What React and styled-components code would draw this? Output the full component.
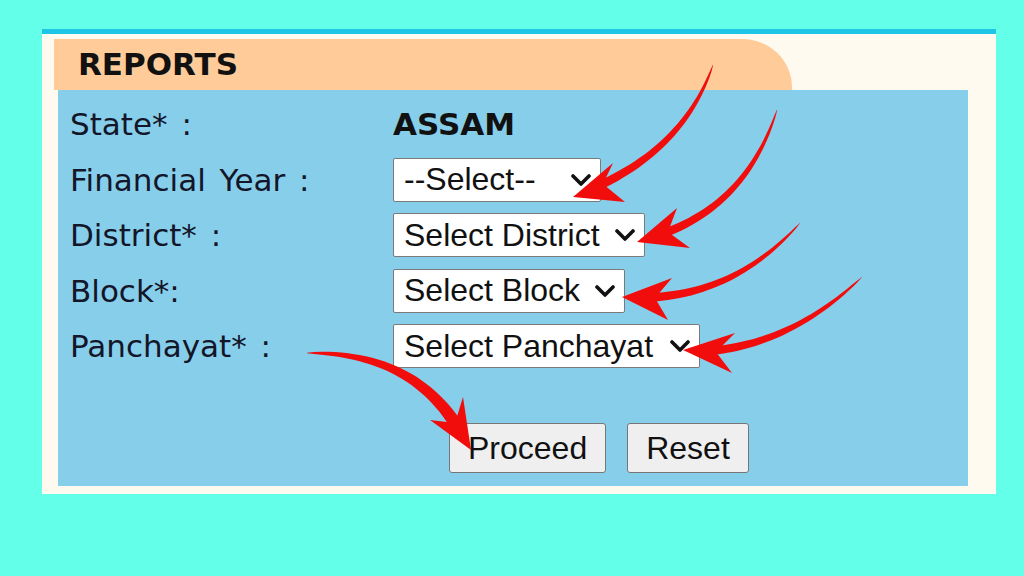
import styled, { createGlobalStyle } from "styled-components";

const GlobalStyle = createGlobalStyle`
  body {
    margin: 0;
    background: #64ffe8;
    font-family: "DejaVu Sans", Verdana, sans-serif;
  }
`;

const fields = [
  { label: "Financial Year :", value: "--Select--", width: 208 },
  { label: "District* :", value: "Select District", width: 252 },
  { label: "Block*:", value: "Select Block", width: 232 },
  { label: "Panchayat* :", value: "Select Panchayat", width: 307 },
];

// tail, control, notch (back of head), tip, two barbs, shaft width at head
const arrows = [
  { tail: [713, 65], ctrl: [684, 149], notch: [603, 184], tip: [573, 197], b1: [613, 163], b2: [625, 202], w: 9 },
  { tail: [777, 110], ctrl: [746, 207], notch: [668, 232], tip: [637, 242], b1: [677, 208], b2: [690, 248], w: 9 },
  { tail: [800, 223], ctrl: [735, 296], notch: [655, 298], tip: [622, 297], b1: [672, 278], b2: [668, 320], w: 9 },
  { tail: [862, 277], ctrl: [790, 346], notch: [716, 352], tip: [683, 350], b1: [735, 333], b2: [732, 373], w: 9 },
  { tail: [307, 353], ctrl: [415, 352], notch: [455, 423], tip: [471, 450], b1: [430, 420], b2: [463, 397], w: 13 },
];

const shaftPath = ({ tail, ctrl, notch, tip, w }) => {
  const end = [notch[0] + 0.35 * (tip[0] - notch[0]), notch[1] + 0.35 * (tip[1] - notch[1])];
  const n = 30;
  const left = [];
  const right = [];
  for (let i = 0; i <= n; i++) {
    const t = i / n;
    const x = (1 - t) * (1 - t) * tail[0] + 2 * (1 - t) * t * ctrl[0] + t * t * end[0];
    const y = (1 - t) * (1 - t) * tail[1] + 2 * (1 - t) * t * ctrl[1] + t * t * end[1];
    const dx = 2 * (1 - t) * (ctrl[0] - tail[0]) + 2 * t * (end[0] - ctrl[0]);
    const dy = 2 * (1 - t) * (ctrl[1] - tail[1]) + 2 * t * (end[1] - ctrl[1]);
    const len = Math.hypot(dx, dy) || 1;
    const half = (0.4 + (w - 0.4) * Math.pow(t, 0.6)) / 2;
    const nx = -dy / len;
    const ny = dx / len;
    left.push([x + nx * half, y + ny * half]);
    right.push([x - nx * half, y - ny * half]);
  }
  const pts = [...left, ...right.reverse()];
  return "M" + pts.map((p) => p[0].toFixed(1) + " " + p[1].toFixed(1)).join(" L") + " Z";
};

const headPath = ({ notch, tip, b1, b2 }) =>
  `M${tip[0]} ${tip[1]} L${b1[0]} ${b1[1]} L${notch[0]} ${notch[1]} L${b2[0]} ${b2[1]} Z`;

const Chevron = () => (
  <svg width="20" height="12" viewBox="0 0 20 12">
    <polyline points="2,2 10,10 18,2" fill="none" stroke="#111" strokeWidth="3.6" strokeLinecap="round" strokeLinejoin="round" />
  </svg>
);

const App = () => {
  return (
    <Page>
      <GlobalStyle />
      <Frame>
        <Tab>REPORTS</Tab>
        <Panel>
          <Form>
            <Label>State* :</Label>
            <StateValue>ASSAM</StateValue>
            {fields.map((f) => (
              <Row key={f.label}>
                <Label>{f.label}</Label>
                <Cell>
                  <SelectBox $width={f.width}>
                    <span>{f.value}</span>
                    <Chevron />
                  </SelectBox>
                </Cell>
              </Row>
            ))}
          </Form>
          <ButtonRow>
            <Button>Proceed</Button>
            <Button>Reset</Button>
          </ButtonRow>
        </Panel>
      </Frame>
      <Overlay width="1024" height="576" viewBox="0 0 1024 576">
        {arrows.map((a, i) => (
          <g key={i} fill="#f20d0d">
            <path d={shaftPath(a)} />
            <path d={headPath(a)} />
          </g>
        ))}
      </Overlay>
    </Page>
  );
};
export default App;

const Page = styled.div`
  position: relative;
  width: 1024px;
  height: 576px;
  box-sizing: border-box;
  padding: 29px 0 0 42px;
  overflow: hidden;
`;
const Frame = styled.div`
  width: 954px;
  box-sizing: border-box;
  border-top: 5px solid #1dc6e6;
  background: #fffaf0;
  padding: 5px 28px 8px 12px;
`;
const Tab = styled.div`
  display: flex;
  align-items: center;
  width: 738px;
  height: 51px;
  box-sizing: border-box;
  padding: 0 0 2px 24px;
  background: #ffcc99;
  border-top-right-radius: 50px 48px;
  color: #111;
  font-size: 31px;
  font-weight: bold;
`;
const Panel = styled.div`
  margin-left: 4px;
  background: #87ceeb;
  padding: 12px 0 13px 12px;
`;
const Form = styled.div`
  display: grid;
  grid-template-columns: 323px auto;
  grid-auto-rows: 44px;
  row-gap: 11.5px;
  align-items: center;
`;
const Row = styled.div`
  display: contents;
`;
const Label = styled.div`
  font-size: 31px;
  color: #131528;
  word-spacing: 4px;
  white-space: nowrap;
`;
const StateValue = styled.div`
  font-size: 31px;
  font-weight: bold;
  color: #111;
`;
const Cell = styled.div`
  display: flex;
  align-items: center;
`;
const SelectBox = styled.div`
  display: flex;
  align-items: center;
  justify-content: space-between;
  width: ${(p) => p.$width}px;
  height: 44px;
  box-sizing: border-box;
  padding: 0 9px 0 10px;
  background: #fff;
  border: 1px solid #7a7a7a;
  border-radius: 2px;
  font-family: "Liberation Sans", Arial, sans-serif;
  font-size: 32px;
  color: #111;
  white-space: nowrap;
  svg {
    flex: none;
    margin-left: 6px;
  }
`;
const ButtonRow = styled.div`
  display: flex;
  gap: 21px;
  margin: 55px 0 0 379px;
`;
const Button = styled.button`
  height: 50px;
  padding: 0 18px;
  background: #efefef;
  border: 1px solid #767676;
  border-radius: 3px;
  font-family: "Liberation Sans", Arial, sans-serif;
  font-size: 32px;
  color: #111;
  cursor: pointer;
`;
const Overlay = styled.svg`
  position: absolute;
  top: 0;
  left: 0;
  pointer-events: none;
`;
